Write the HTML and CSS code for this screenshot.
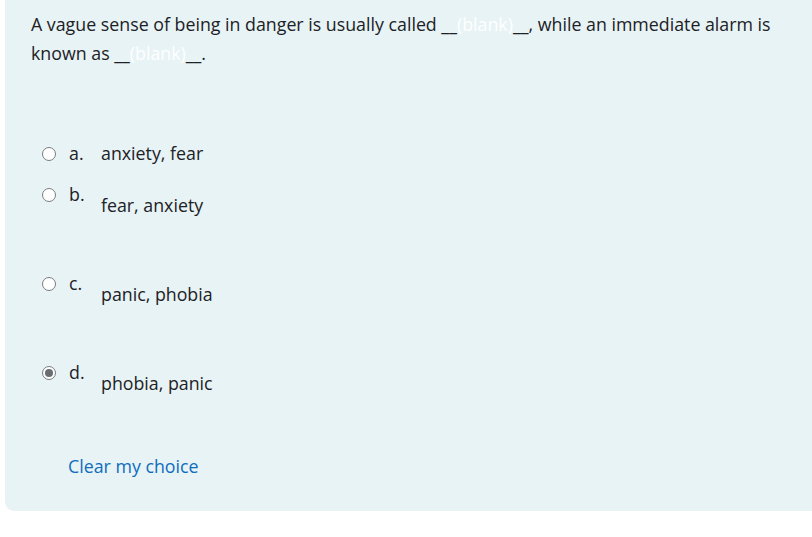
FILE: index.html
```html
<!DOCTYPE html>
<html>
<head>
    <link rel="stylesheet" href="styles.css">
</head>
<body>
    <div class="que">
        <div class="qtext">
            A vague sense of being in danger is usually called __<span class="blank">(blank)</span>__, while an immediate alarm is known as __<span class="blank">(blank)</span>__.
        </div>
        <div class="answer">
            <div class="option">
                <span class="radio"></span>
                <span class="letter">a.</span>
                <div class="atext">anxiety, fear</div>
            </div>
            <div class="option">
                <span class="radio"></span>
                <span class="letter">b.</span>
                <div class="atext"><p>fear, anxiety</p></div>
            </div>
            <div class="option">
                <span class="radio"></span>
                <span class="letter">c.</span>
                <div class="atext"><p>panic, phobia</p></div>
            </div>
            <div class="option">
                <span class="radio checked"></span>
                <span class="letter">d.</span>
                <div class="atext"><p>phobia, panic</p></div>
            </div>
        </div>
        <div class="clear">
            <a href="#">Clear my choice</a>
        </div>
    </div>
</body>
</html>
```

FILE: styles.css
```css
body {
    margin: 0;
    font-family: 'Open Sans', sans-serif;
    font-size: 17.8px;
    color: #1d2125;
    background-color: white;
    overflow: hidden;
}
.que {
    margin-left: 5px;
    margin-top: -10px;
    padding: 20px 26px 33px 26px;
    background-color: #e7f3f5;
    border-radius: 0 0 0 9px;
}
.qtext {
    width: 760px;
    line-height: 29px;
}
.blank {
    color: white;
}
.answer {
    margin-top: 73px;
    padding-left: 11px;
}
.option {
    display: flex;
    align-items: flex-start;
    line-height: 24px;
    margin-bottom: 17px;
}
.radio {
    flex-shrink: 0;
    width: 14px;
    height: 14px;
    border: 1px solid #7a7d80;
    border-radius: 50%;
    background-color: white;
    box-sizing: border-box;
    margin-top: 6px;
    position: relative;
}
.radio.checked::after {
    content: '';
    position: absolute;
    left: 2px;
    top: 2px;
    width: 8px;
    height: 8px;
    border-radius: 50%;
    background-color: #6a6d70;
}
.letter {
    width: 32px;
    margin-left: 13px;
}
.atext p {
    margin: 11px 0 37px 0;
}
.clear {
    margin-top: 22px;
    padding-left: 37px;
}
.clear a {
    color: #0f6cbf;
    text-decoration: none;
}
```
